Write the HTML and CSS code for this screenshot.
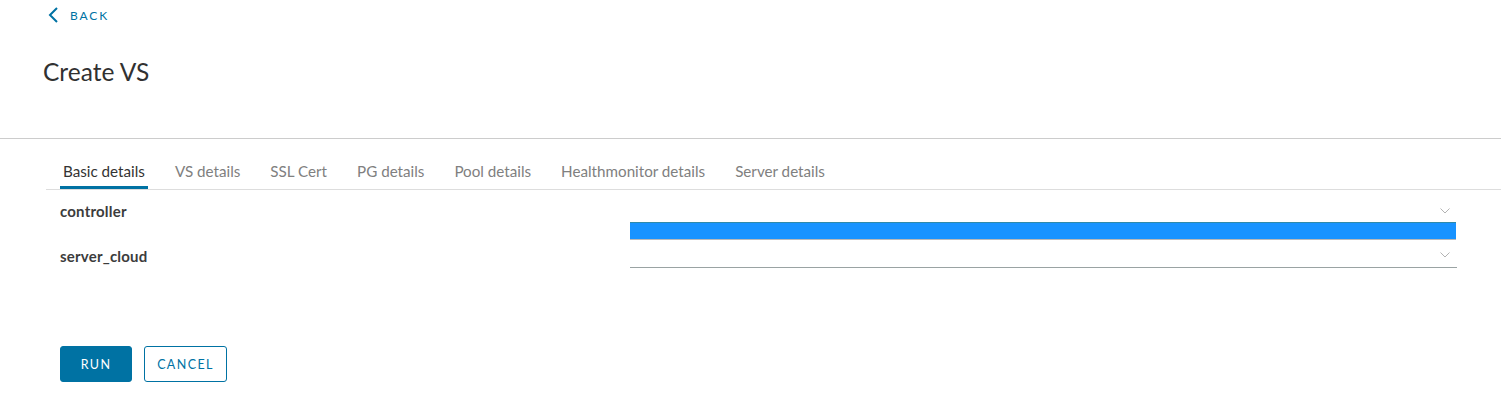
FILE: index.html
```html
<!DOCTYPE html>
<html>
<head>
<meta charset="utf-8">
<link rel="stylesheet" href="styles.css">
</head>
<body>
<div class="top">
  <a class="back" href="#">
    <svg class="back-icon" width="12" height="18" viewBox="0 0 12 18"><polyline points="10,2 3,9 10,16" fill="none" stroke="#0072a3" stroke-width="2"/></svg>
    <span>BACK</span>
  </a>
  <h1 class="title">Create VS</h1>
</div>
<div class="divider"></div>
<div class="tabs">
  <div class="tab active">Basic details</div>
  <div class="tab">VS details</div>
  <div class="tab">SSL Cert</div>
  <div class="tab">PG details</div>
  <div class="tab">Pool details</div>
  <div class="tab">Healthmonitor details</div>
  <div class="tab">Server details</div>
</div>
<div class="form">
  <div class="row row1">
    <div class="label">controller</div>
    <div class="select open">
      <svg class="chev" width="10" height="6" viewBox="0 0 10 6"><polyline points="0.5,0.5 5,5 9.5,0.5" fill="none" stroke="#b3b3b3" stroke-width="1"/></svg>
      <div class="dropdown"></div>
    </div>
  </div>
  <div class="row row2">
    <div class="label">server_cloud</div>
    <div class="select bordered">
      <svg class="chev" width="10" height="6" viewBox="0 0 10 6"><polyline points="0.5,0.5 5,5 9.5,0.5" fill="none" stroke="#b3b3b3" stroke-width="1"/></svg>
    </div>
  </div>
  <div class="buttons">
    <button class="btn primary">RUN</button>
    <button class="btn outline">CANCEL</button>
  </div>
</div>
</body>
</html>
```
FILE: styles.css
```css
html, body {
  margin: 0;
  padding: 0;
  background: #ffffff;
  font-family: Lato, "Noto Sans", "Liberation Sans", sans-serif;
  color: #333333;
}
.top {
  padding-left: 43px;
  height: 138px;
  box-sizing: border-box;
}
.back {
  display: flex;
  align-items: center;
  gap: 11px;
  height: 30px;
  padding-left: 4px;
  text-decoration: none;
  color: #0072a3;
  font-size: 12px;
  letter-spacing: 1.9px;
}
.back-icon {
  display: block;
}
.title {
  margin: 26px 0 0 0;
  font-size: 24.5px;
  font-weight: 400;
  line-height: 32px;
  color: #313131;
}
.divider {
  height: 1px;
  background: #cccccc;
}
.tabs {
  display: flex;
  gap: 24px;
  margin-left: 46px;
  margin-top: 20px;
  padding-left: 14px;
  border-bottom: 1px solid #dddddd;
  height: 30px;
  box-sizing: content-box;
}
.tab {
  font-size: 15.2px;
  line-height: 24px;
  padding: 0 3px;
  color: #808080;
  height: 27px;
  border-bottom: 3px solid transparent;
}
.tab.active {
  color: #333333;
  border-bottom-color: #0072a3;
}
.form {
  padding-left: 60px;
}
.row {
  display: grid;
  grid-template-columns: 570px 827px;
  align-items: center;
}
.row1 {
  margin-top: 10px;
  height: 22px;
}
.row2 {
  margin-top: 22px;
  height: 24px;
}
.label {
  font-size: 15px;
  font-weight: 700;
  color: #3c3c3c;
  letter-spacing: 0.2px;
}
.select {
  position: relative;
  height: 100%;
  box-sizing: border-box;
}
.select.bordered {
  border-bottom: 1px solid #9aa3a3;
}
.chev {
  position: absolute;
  right: 7px;
  top: 8px;
}
.dropdown {
  position: absolute;
  left: 0;
  top: 22px;
  width: 826px;
  height: 18px;
  box-sizing: border-box;
  background: #1893ff;
  border-top: 1px solid #2f8aab;
  border-bottom: 1px solid #b9b9b9;
}
.buttons {
  display: flex;
  gap: 12px;
  margin-top: 78px;
}
.btn {
  height: 36px;
  box-sizing: border-box;
  border-radius: 3px;
  font-family: Lato, "Noto Sans", "Liberation Sans", sans-serif;
  font-size: 12.5px;
  letter-spacing: 1.4px;
  padding: 0;
}
.btn.primary {
  width: 72px;
  background: #0072a3;
  color: #ffffff;
  border: 1px solid #0072a3;
}
.btn.outline {
  width: 83px;
  background: #ffffff;
  color: #0072a3;
  border: 1px solid #0072a3;
}
```
